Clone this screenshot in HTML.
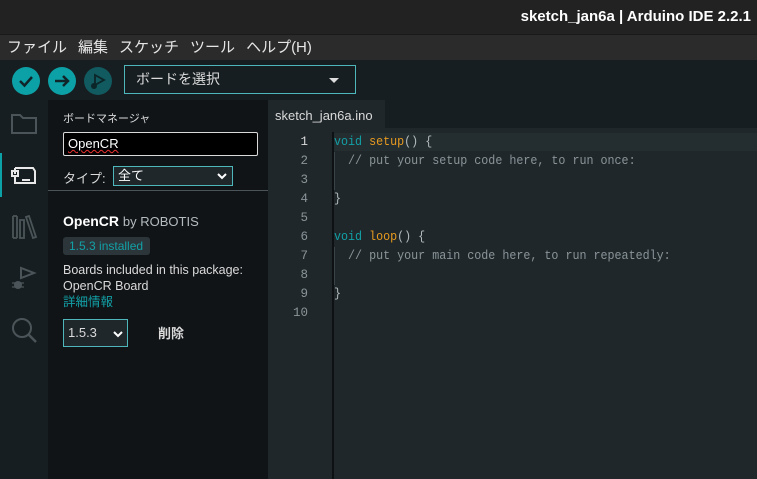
<!DOCTYPE html>
<html><head><meta charset="utf-8"><style>
*{margin:0;padding:0;box-sizing:border-box}
body{width:757px;height:479px;overflow:hidden;background:#1f272a;font-family:"Liberation Sans","Noto Sans CJK JP",sans-serif;position:relative}
.abs{position:absolute}
#title{left:0;top:0;width:757px;height:35px;background:#222;border-bottom:1px solid #1a1a1a}
#title span{position:absolute;right:6px;top:8px;color:#fff;font-weight:bold;font-size:15px;font-family:"Liberation Sans",sans-serif}
#menu{left:0;top:35px;width:757px;height:25px;background:#2b2b2b;color:#e6e6e6;font-size:15px;line-height:25px;padding-left:7px;word-spacing:0}
#menu span{margin-right:11px}
#tool{left:0;top:60px;width:757px;height:40px;background:#171e21}
.btn{position:absolute;top:67px;width:28px;height:28px;border-radius:50%;background:#0ca1a6}
#sel{left:124px;top:65px;width:232px;height:29px;border:1px solid #4db7bb;background:#171e21;color:#dadada;font-size:14px;line-height:27px;padding-left:11px}
#sel:after{content:"";position:absolute;right:16px;top:12px;border:5px solid transparent;border-top:5px solid #ddd;border-bottom:0}
#side{left:0;top:100px;width:48px;height:379px;background:#171e21}
#panel{left:48px;top:100px;width:220px;height:379px;background:#101417}
#tabbar{left:268px;top:100px;width:489px;height:28px;background:#171e21}
#tab{left:268px;top:100px;width:117px;height:32px;background:#1f272a;color:#dadada;font-size:13px;padding:8px 0 0 7px}
.ln{position:absolute;left:268px;width:40px;text-align:right;color:#8a9499;font-family:"Liberation Mono",monospace;font-size:12.5px}
.cd{position:absolute;left:334px;color:#b4bcc0;font-family:"Liberation Mono",monospace;font-size:11.7px;white-space:pre;transform:scaleY(1.12);transform-origin:left top}
.k{color:#12a0a6}.f{color:#e69a1f}.c{color:#8a9499}
</style></head><body>
<div id="title" class="abs"><span>sketch_jan6a | Arduino IDE 2.2.1</span></div>
<div id="menu" class="abs"><span>ファイル</span><span>編集</span><span>スケッチ</span><span>ツール</span><span>ヘルプ(H)</span></div>
<div id="tool" class="abs"></div>
<div class="btn" style="left:12px"><svg width="28" height="28"><path d="M8 14l4.5 4.5L20 10" stroke="#10252a" stroke-width="2.5" fill="none"/></svg></div>
<div class="btn" style="left:48px"><svg width="28" height="28"><path d="M7 14h13M15 9l5 5-5 5" stroke="#10252a" stroke-width="2.5" fill="none"/></svg></div>
<div class="btn" style="left:84px;background:#115a5f"><svg width="28" height="28"><path d="M11 8v10l9-5z" stroke="#0c2528" stroke-width="1.8" fill="none"/><circle cx="10" cy="19" r="3" fill="#0c2528"/></svg></div>
<div id="sel" class="abs">ボードを選択</div>
<div id="side" class="abs">
<div class="abs" style="left:0;top:53px;width:2px;height:44px;background:#0ca1a6"></div>
<svg class="abs" style="left:10px;top:10px" width="30" height="30"><path d="M2 5h8l3 3h13v15H2z" stroke="#4b5559" stroke-width="2" fill="none"/></svg>
<svg class="abs" style="left:10px;top:62px" width="30" height="30"><path d="M5 6h18l2 3v12H5v-6M5 12V6" stroke="#e8e8e8" stroke-width="2" fill="none"/><rect x="2" y="9" width="6" height="5" stroke="#e8e8e8" stroke-width="2" fill="none"/><path d="M12 18h8" stroke="#e8e8e8" stroke-width="2"/></svg>
<svg class="abs" style="left:10px;top:112px" width="30" height="30"><path d="M3 4v22M7 4v22M3 4h4M3 26h4M10 8v18h4V8zM16 5l7 21 3-1-7-21z" stroke="#4b5559" stroke-width="1.8" fill="none"/></svg>
<svg class="abs" style="left:10px;top:164px" width="30" height="30"><path d="M11 4v10l13-5z" stroke="#4b5559" stroke-width="2" fill="none"/><circle cx="8" cy="21" r="4" fill="#4b5559"/><path d="M2 19h12M2 23h12" stroke="#4b5559" stroke-width="1.2"/></svg>
<svg class="abs" style="left:10px;top:216px" width="30" height="30"><circle cx="12" cy="12" r="9" stroke="#4b5559" stroke-width="2" fill="none"/><path d="M18 18l8 8" stroke="#4b5559" stroke-width="2.5"/></svg>
</div>
<div id="panel" class="abs">
<div class="abs" style="left:15px;top:10px;color:#dadada;font-size:11px">ボードマネージャ</div>
<div class="abs" style="left:15px;top:32px;width:195px;height:24px;border:1px solid #dadada;border-radius:2px;background:#000;color:#fff;font-size:13px;padding:3px 4px"><span style="text-decoration:underline wavy #e33;text-decoration-thickness:1px">OpenCR</span></div>
<div class="abs" style="left:15px;top:68px;color:#dadada;font-size:13px">タイプ:</div>
<div class="abs" style="left:65px;top:66px;width:120px;height:20px;border:1px solid #4db7bb;background:#1f272a;color:#fff;font-size:13px;padding:0 4px;line-height:18px">全て<svg class="abs" style="right:5px;top:5px" width="10" height="8"><path d="M1 2l4 4 4-4" stroke="#fff" stroke-width="2" fill="none"/></svg></div>
<div class="abs" style="left:0;top:90px;width:220px;height:1px;background:#4b5559"></div>
<div class="abs" style="left:15px;top:113px;color:#fff;font-size:14px"><b>OpenCR</b> <span style="color:#b4bcc0;font-size:13px">by ROBOTIS</span></div>
<div class="abs" style="left:15px;top:137px;width:87px;height:18px;background:#2c363a;border-radius:3px;color:#12a0a6;font-size:12px;line-height:18px;padding-left:6px">1.5.3 installed</div>
<div class="abs" style="left:15px;top:162px;color:#dadada;font-size:12.5px;line-height:16px">Boards included in this package:<br>OpenCR Board<br><span style="color:#12a0a6">詳細情報</span></div>
<div class="abs" style="left:15px;top:219px;width:65px;height:28px;border:1px solid #4db7bb;background:#1f272a;color:#dadada;font-size:13px;line-height:26px;padding-left:4px">1.5.3<svg class="abs" style="right:4px;top:10px" width="10" height="8"><path d="M1 2l4 4 4-4" stroke="#fff" stroke-width="2" fill="none"/></svg></div>
<div class="abs" style="left:110px;top:223px;color:#dadada;font-size:13px;font-weight:bold">削除</div>
</div>
<div id="tabbar" class="abs"></div>
<div id="tab" class="abs">sketch_jan6a.ino</div>
<div class="abs" style="left:332px;top:132px;width:2px;height:347px;background:#0d1113"></div>
<div class="abs" style="left:334px;top:133px;width:423px;height:18px;background:#242d30"></div>
<div class="abs" style="left:334px;top:152px;width:1px;height:38px;background:#3a4448"></div>
<div class="abs" style="left:334px;top:247px;width:1px;height:38px;background:#3a4448"></div>
<div class="ln" style="top:135px;color:#dadada">1</div><div class="ln" style="top:154px">2</div><div class="ln" style="top:173px">3</div><div class="ln" style="top:192px">4</div><div class="ln" style="top:211px">5</div><div class="ln" style="top:230px">6</div><div class="ln" style="top:249px">7</div><div class="ln" style="top:268px">8</div><div class="ln" style="top:287px">9</div><div class="ln" style="top:306px">10</div>
<div class="cd" style="top:134px"><span class="k">void</span> <span class="f">setup</span>() {</div>
<div class="cd c" style="top:153px">  // put your setup code here, to run once:</div>
<div class="cd" style="top:191px">}</div>
<div class="cd" style="top:229px"><span class="k">void</span> <span class="f">loop</span>() {</div>
<div class="cd c" style="top:248px">  // put your main code here, to run repeatedly:</div>
<div class="cd" style="top:286px">}</div>
</body></html>
